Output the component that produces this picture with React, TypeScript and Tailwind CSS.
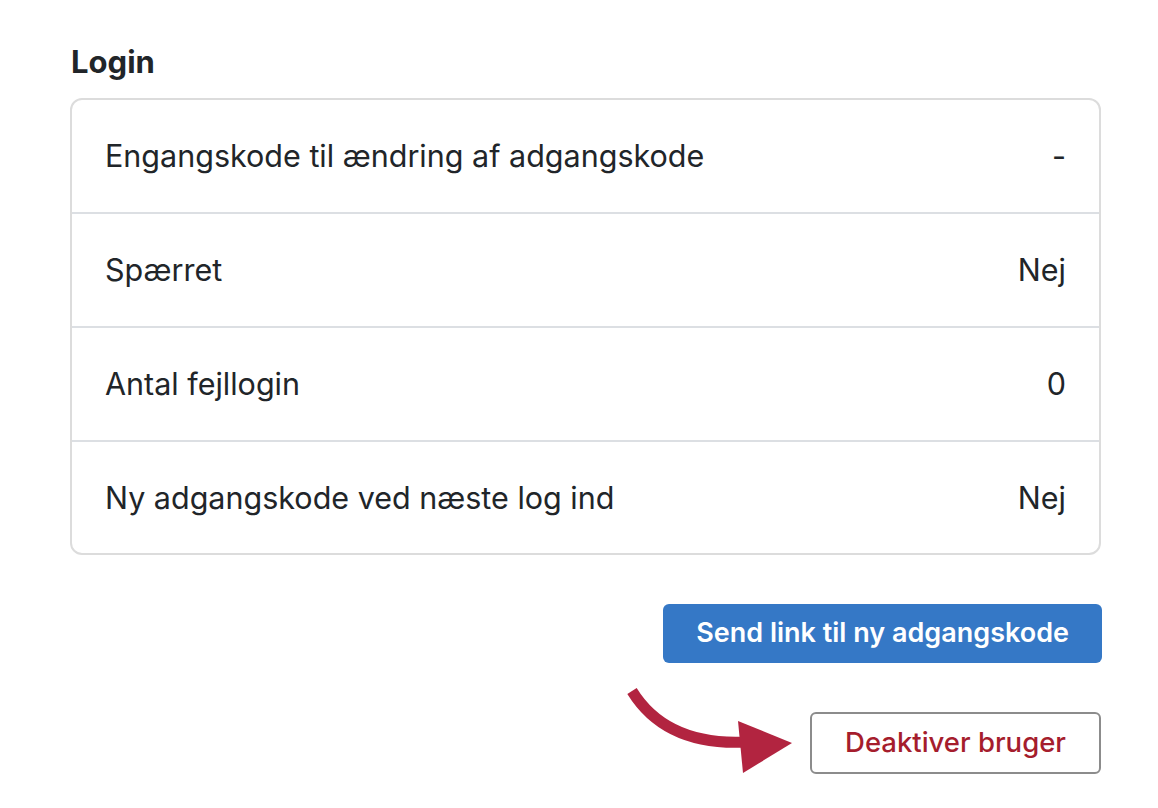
import React from "react";

const rows: { label: string; value: string }[] = [
  { label: "Engangskode til ændring af adgangskode", value: "-" },
  { label: "Spærret", value: "Nej" },
  { label: "Antal fejllogin", value: "0" },
  { label: "Ny adgangskode ved næste log ind", value: "Nej" },
];

const CurvedArrow = () => (
  <svg width="170" height="92" viewBox="0 0 170 92" className="shrink-0 -mt-[26px]">
    <path d="M6 5 Q40 60 120 56" fill="none" stroke="#b22440" strokeWidth="11" />
    <polygon points="112,35 166,57 117,87" fill="#b22440" />
  </svg>
);

export default function App() {
  return (
    <div
      className="w-[1158px] h-[808px] bg-white pl-[70px] pr-[57px] pt-[44px] text-[#212529]"
      style={{ fontFamily: "Inter, 'Noto Sans', sans-serif" }}
    >
      <h2 className="text-[31px] leading-[36px] font-bold mb-[18px] pl-px">Login</h2>

      <div className="border-2 border-[#dcdcdc] rounded-[12px] overflow-hidden">
        {rows.map((row, i) => (
          <div
            key={row.label}
            className={`flex items-center justify-between px-[33px] text-[30.5px] ${
              i < rows.length - 1 ? "h-[114px] border-b-2 border-[#dcdfe3]" : "h-[111px]"
            }`}
          >
            <span>{row.label}</span>
            <span>{row.value}</span>
          </div>
        ))}
      </div>

      <div className="flex flex-col items-end mt-[49px] gap-[49px]">
        <button className="h-[59px] px-[33px] rounded-[6px] bg-[#3578c6] text-white text-[27px] font-semibold -mr-px">
          Send link til ny adgangskode
        </button>
        <div className="flex items-start gap-[14px]">
          <CurvedArrow />
          <button className="h-[62px] px-[33px] rounded-[6px] border-2 border-[#8c8c8c] bg-white text-[#a51d2d] text-[27.5px] font-medium">
            Deaktiver bruger
          </button>
        </div>
      </div>
    </div>
  );
}
